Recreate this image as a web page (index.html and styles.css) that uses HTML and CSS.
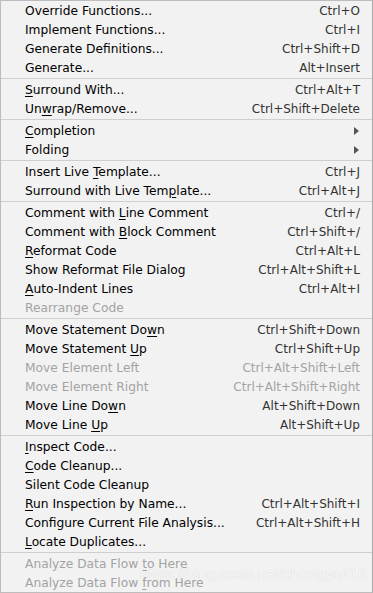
FILE: index.html
```html
<!DOCTYPE html>
<html>
<head>
    <title>Generate Menu</title>
    <link rel="stylesheet" href="styles.css">
</head>
<body>
    <div class="menu">
        <div class="item"><span>Override Functions...</span><span class="key">Ctrl+O</span></div>
        <div class="item"><span>Implement Functions...</span><span class="key">Ctrl+I</span></div>
        <div class="item"><span>Generate Definitions...</span><span class="key">Ctrl+Shift+D</span></div>
        <div class="item"><span>Generate...</span><span class="key">Alt+Insert</span></div>
        <div class="sep"></div>
        <div class="item"><span><u>S</u>urround With...</span><span class="key">Ctrl+Alt+T</span></div>
        <div class="item"><span>Un<u>w</u>rap/Remove...</span><span class="key">Ctrl+Shift+Delete</span></div>
        <div class="sep"></div>
        <div class="item"><span><u>C</u>ompletion</span><span class="arrow"></span></div>
        <div class="item"><span>Folding</span><span class="arrow"></span></div>
        <div class="sep"></div>
        <div class="item"><span>Insert Live <u>T</u>emplate...</span><span class="key">Ctrl+J</span></div>
        <div class="item"><span>Surround with Live Tem<u>p</u>late...</span><span class="key">Ctrl+Alt+J</span></div>
        <div class="sep"></div>
        <div class="item"><span>Comment with <u>L</u>ine Comment</span><span class="key">Ctrl+/</span></div>
        <div class="item"><span>Comment with <u>B</u>lock Comment</span><span class="key">Ctrl+Shift+/</span></div>
        <div class="item"><span><u>R</u>eformat Code</span><span class="key">Ctrl+Alt+L</span></div>
        <div class="item"><span>Show Reformat File Dialog</span><span class="key">Ctrl+Alt+Shift+L</span></div>
        <div class="item"><span><u>A</u>uto-Indent Lines</span><span class="key">Ctrl+Alt+I</span></div>
        <div class="item disabled"><span>Rearrange Code</span></div>
        <div class="sep"></div>
        <div class="item"><span>Move Statement Do<u>w</u>n</span><span class="key">Ctrl+Shift+Down</span></div>
        <div class="item"><span>Move Statement <u>U</u>p</span><span class="key">Ctrl+Shift+Up</span></div>
        <div class="item disabled"><span>Move Element Left</span><span class="key">Ctrl+Alt+Shift+Left</span></div>
        <div class="item disabled"><span>Move Element Right</span><span class="key">Ctrl+Alt+Shift+Right</span></div>
        <div class="item"><span>Move Line Do<u>w</u>n</span><span class="key">Alt+Shift+Down</span></div>
        <div class="item"><span>Move Line <u>U</u>p</span><span class="key">Alt+Shift+Up</span></div>
        <div class="sep"></div>
        <div class="item"><span><u>I</u>nspect Code...</span></div>
        <div class="item"><span><u>C</u>ode Cleanup...</span></div>
        <div class="item"><span>Silent Code Cleanup</span></div>
        <div class="item"><span><u>R</u>un Inspection by Name...</span><span class="key">Ctrl+Alt+Shift+I</span></div>
        <div class="item"><span>Configure Current File Analysis...</span><span class="key">Ctrl+Alt+Shift+H</span></div>
        <div class="item"><span><u>L</u>ocate Duplicates...</span></div>
        <div class="sep"></div>
        <div class="item disabled"><span>Analyze Data Flow <u>t</u>o Here</span></div>
        <div class="item disabled"><span>Analyze Data Flow <u>f</u>rom Here</span></div>
        <div class="watermark">https://blog.csdn.net/chengyq116</div>
    </div>
</body>
</html>
```

FILE: styles.css
```css
body {
    margin: 0;
    font-family: "DejaVu Sans", sans-serif;
    font-size: 12px;
    background-color: #f2f2f2;
}
.menu {
    position: relative;
    width: 373px;
    height: 593px;
    box-sizing: border-box;
    border: 1px solid #bdbdbd;
    border-right-color: #a8a8a8;
    background-color: #f2f2f2;
    overflow: hidden;
}
.item {
    display: flex;
    justify-content: space-between;
    align-items: center;
    height: 19px;
    padding: 0 12px 0 24px;
    font-size: 12.25px;
    color: #000;
    white-space: nowrap;
}
.item u {
    text-underline-offset: 2px;
}
.key {
    font-size: 12px;
    color: #333;
}
.disabled,
.disabled .key {
    color: #a3a3a3;
}
.arrow {
    width: 0;
    height: 0;
    margin-right: 1px;
    border-top: 4px solid transparent;
    border-bottom: 4px solid transparent;
    border-left: 5px solid #555;
}
.sep {
    height: 1px;
    margin: 1px 0;
    background-color: #cfcfcf;
}
.watermark {
    position: absolute;
    left: 139px;
    top: 564px;
    font-family: "Liberation Sans", Arial, sans-serif;
    font-size: 15.5px;
    white-space: nowrap;
    color: rgba(255, 255, 255, 0.85);
    text-shadow: 0 0 1px rgba(0, 0, 0, 0.18);
}
```
